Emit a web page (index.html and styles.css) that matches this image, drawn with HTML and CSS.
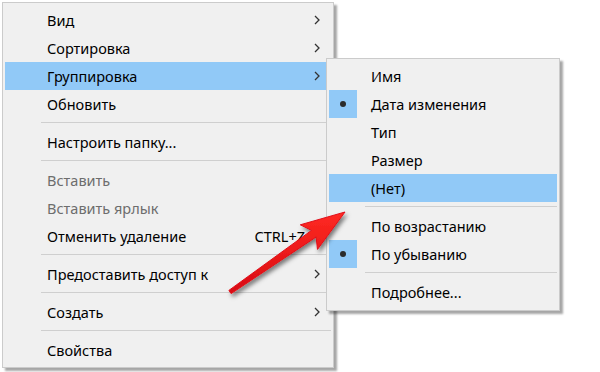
FILE: index.html
```html
<!DOCTYPE html>
<html lang="ru">
<head>
<meta charset="UTF-8" />
<title>Контекстное меню</title>
<link rel="stylesheet" href="styles.css">
</head>
<body>

<div class="desk">
  <ul class="menu main">
    <li class="item"><span>Вид</span><svg class="chev" viewBox="0 0 6 10"><path d="M1 1l4 4-4 4"/></svg></li>
    <li class="item"><span>Сортировка</span><svg class="chev" viewBox="0 0 6 10"><path d="M1 1l4 4-4 4"/></svg></li>
    <li class="item active"><span>Группировка</span><svg class="chev" viewBox="0 0 6 10"><path d="M1 1l4 4-4 4"/></svg></li>
    <li class="item"><span>Обновить</span></li>
    <li class="sep"></li>
    <li class="item"><span>Настроить папку...</span></li>
    <li class="sep"></li>
    <li class="item off"><span>Вставить</span></li>
    <li class="item off"><span>Вставить ярлык</span></li>
    <li class="item"><span>Отменить удаление</span><span class="key">CTRL+Z</span></li>
    <li class="sep"></li>
    <li class="item"><span>Предоставить доступ к</span><svg class="chev" viewBox="0 0 6 10"><path d="M1 1l4 4-4 4"/></svg></li>
    <li class="sep"></li>
    <li class="item"><span>Создать</span><svg class="chev" viewBox="0 0 6 10"><path d="M1 1l4 4-4 4"/></svg></li>
    <li class="sep"></li>
    <li class="item"><span>Свойства</span></li>
  </ul>

  <ul class="menu sub">
    <li class="item"><span>Имя</span></li>
    <li class="item checked"><span>Дата изменения</span></li>
    <li class="item"><span>Тип</span></li>
    <li class="item"><span>Размер</span></li>
    <li class="item active"><span>(Нет)</span></li>
    <li class="sep"></li>
    <li class="item"><span>По возрастанию</span></li>
    <li class="item checked"><span>По убыванию</span></li>
    <li class="sep"></li>
    <li class="item"><span>Подробнее...</span></li>
  </ul>

  <svg class="arrow" width="600" height="372" viewBox="0 0 600 372">
    <defs>
      <filter id="shade" x="-20%" y="-20%" width="140%" height="140%">
        <feDropShadow dx="2" dy="3" stdDeviation="2" flood-color="#000" flood-opacity="0.5"/>
      </filter>
      <linearGradient id="red" x1="0" y1="0" x2="0" y2="1">
        <stop offset="0" stop-color="#ff2a22"/>
        <stop offset="1" stop-color="#d80a12"/>
      </linearGradient>
    </defs>
    <path filter="url(#shade)" fill="url(#red)" stroke="#e0111a" stroke-width="1" stroke-linejoin="round"
      d="M228.9 290.4 L311.5 230.4 L300.3 224.8 L345 212 L317.5 249.4 L316.1 237 L231.1 293.6 Z"/>
  </svg>
</div>

</body>
</html>
```

FILE: styles.css
```css
body {
  margin: 0;
  background: #fff;
  font-family: "Noto Sans", "Open Sans", sans-serif;
  font-size: 14.5px;
  color: #000;
}

.desk {
  position: relative;
  width: 600px;
  height: 372px;
  overflow: hidden;
}

.menu {
  list-style: none;
  margin: 0;
  padding: 3px 2px;
  background: #f0f0f0;
  border: 1px solid #cbcbcb;
  box-shadow: 3px 3px 2px rgba(0, 0, 0, 0.35);
}

.main {
  margin: 2px 0 0 2px;
  width: 326px;
}

.sub {
  position: absolute;
  left: 326px;
  top: 58px;
  width: 228px;
  padding-bottom: 4px;
}

.item {
  display: flex;
  align-items: center;
  justify-content: space-between;
  height: 28px;
  padding: 0 11px 0 42px;
  position: relative;
}

.item.active {
  background: #91c9f7;
}

.item.off {
  color: #6d6d6d;
}

.key {
  margin-right: 15px;
}

.chev {
  width: 6px;
  height: 10px;
  fill: none;
  stroke: #333;
  stroke-width: 1.3;
}

.sep {
  height: 1px;
  margin: 4px 0 5px 36px;
  background: #cfcfcf;
}

.checked::before {
  content: "";
  position: absolute;
  left: 0;
  top: 0;
  width: 28px;
  height: 28px;
  background: #91c9f7;
}

.checked::after {
  content: "";
  position: absolute;
  left: 11px;
  top: 11px;
  width: 6px;
  height: 6px;
  border-radius: 50%;
  background: #2b2b2b;
}

.arrow {
  position: absolute;
  left: 0;
  top: 0;
  pointer-events: none;
}
```
